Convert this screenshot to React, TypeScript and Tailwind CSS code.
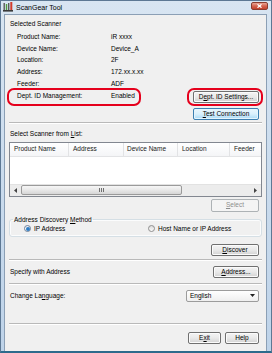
import React from "react";

function Btn({
  children,
  kind = "normal",
  className = "",
}: {
  children: React.ReactNode;
  kind?: "normal" | "disabled" | "focused";
  className?: string;
}) {
  const base =
    "h-[12px] rounded-[2px] border flex items-center justify-center text-[6.5px] leading-none shrink-0";
  const look =
    kind === "disabled"
      ? "border-[#adb2b5] bg-[#f4f4f4] text-[#8d8d8d]"
      : kind === "focused"
      ? "border-[#3c7fb1] bg-linear-to-b from-[#eaf6fd] via-[#d9f0fc] to-[#a9daf6] text-black shadow-[inset_0_0_0_1px_#e4f4fc]"
      : "border-[#707070] bg-linear-to-b from-[#f4f4f4] via-[#e9e9e9] to-[#d2d2d2] text-black shadow-[inset_0_0_0_1px_#fbfbfb]";
  return <div className={`${base} ${look} ${className}`}>{children}</div>;
}

function Sep({ className = "" }: { className?: string }) {
  return (
    <div
      className={`h-[2px] shrink-0 border-t border-[#b9b9b9] border-b border-b-white ${className}`}
    />
  );
}

function Row({ label, value }: { label: string; value: string }) {
  return (
    <div className="h-[11.7px] flex items-center pl-[8px]">
      <span className="w-[94px] shrink-0">{label}</span>
      <span>{value}</span>
    </div>
  );
}

function Tri({ dir }: { dir: "left" | "right" | "down" }) {
  if (dir === "down")
    return (
      <svg width="5" height="3" viewBox="0 0 5 3" className="shrink-0">
        <polygon points="0,0 5,0 2.5,3" fill="#222" />
      </svg>
    );
  return (
    <svg width="3" height="5" viewBox="0 0 3 5" className="shrink-0">
      {dir === "left" ? (
        <polygon points="3,0 3,5 0,2.5" fill="#444" />
      ) : (
        <polygon points="0,0 0,5 3,2.5" fill="#444" />
      )}
    </svg>
  );
}

function Radio({ checked }: { checked?: boolean }) {
  return checked ? (
    <span className="w-[7px] h-[7px] rounded-full border border-[#6f8197] bg-linear-to-b from-[#e8eef4] to-[#ffffff] flex items-center justify-center shrink-0">
      <span className="w-[4px] h-[4px] rounded-full bg-[#2d7cc4]" />
    </span>
  ) : (
    <span className="w-[7px] h-[7px] rounded-full border border-[#8f8f8f] bg-linear-to-b from-[#dcdcdc] to-[#fafafa] shrink-0" />
  );
}

export default function App() {
  return (
    <div className="w-[272px] h-[353px] flex flex-col overflow-hidden bg-linear-to-b from-[#d8e5f2] to-[#bed3e9] border-x border-t border-[#5d7894] border-b-2 border-b-[#2d6b8c] font-['Liberation_Sans',Arial,sans-serif] text-black">
      {/* Title bar */}
      <div className="h-[13px] shrink-0 flex items-start pl-[2px] pr-[3px]">
        <svg width="10" height="10" viewBox="0 0 10 10" className="mt-[1px] shrink-0">
          <rect x="0.5" y="1" width="1.4" height="8" fill="#5a5a5a" />
          <rect x="2.8" y="2" width="1.4" height="7" fill="#4e9a3c" />
          <rect x="5" y="1" width="1.4" height="8" fill="#5a5a5a" />
          <rect x="7.3" y="0" width="2" height="9" fill="#d23a2a" />
          <rect x="0" y="8" width="10" height="1.6" fill="#3a3a3a" />
        </svg>
        <span className="ml-[3px] mt-[3px] text-[7px] leading-none">ScanGear Tool</span>
        <div className="ml-auto mt-[1px] w-[17px] h-[8px] rounded-[2px] border border-[#8a3c30] bg-linear-to-b from-[#e9a596] via-[#d46450] to-[#c4402c] flex items-center justify-center">
          <svg width="5" height="4" viewBox="0 0 5 4">
            <path d="M0.5 0.3 L4.5 3.7 M4.5 0.3 L0.5 3.7" stroke="#fff" strokeWidth="1.2" />
          </svg>
        </div>
      </div>

      {/* Client area */}
      <div className="relative flex-1 ml-[3px] mr-[4px] bg-[#f0f0f0] border-x border-t border-[#8b9fb5] flex flex-col px-[4px] text-[6.5px] leading-none">
        <div className="mt-[4px] h-[10px] flex items-center pl-[1px]">Selected Scanner</div>

        <div className="mt-[2.5px] flex flex-col">
          <Row label="Product Name:" value="iR xxxx" />
          <Row label="Device Name:" value="Device_A" />
          <Row label="Location:" value="2F" />
          <Row label="Address:" value="172.xx.x.xx" />
          <Row label="Feeder:" value="ADF" />
          <div className="h-[11.7px] flex items-center pl-[8px]">
            <span className="w-[94px] shrink-0">Dept. ID Management:</span>
            <span>Enabled</span>
            <Btn className="ml-auto mr-[3px] w-[66px] self-start mt-[1px]">
              <span>
                D<span className="underline">e</span>pt. ID Settings...
              </span>
            </Btn>
          </div>
        </div>

        <div className="mt-[6.3px] flex justify-end pr-[3px]">
          <Btn kind="focused" className="w-[66px]">
            <span>
              <span className="underline">T</span>est Connection
            </span>
          </Btn>
        </div>

        <Sep className="mt-[2.5px]" />

        <div className="mt-[4.5px] h-[10px] flex items-center pl-[1px]">
          Select Scanner from&nbsp;<span className="underline">L</span>ist:
        </div>

        {/* List view */}
        <div className="mt-[3px] h-[55px] shrink-0 border border-[#828790] bg-white flex flex-col">
          <div className="h-[14px] flex border-b border-[#e2e3e5] bg-linear-to-b from-white to-[#f4f5f7] text-[#1a1a1a]">
            <div className="w-[59px] shrink-0 border-r border-[#e2e3e5] flex items-center pl-[4px]">Product Name</div>
            <div className="w-[55px] shrink-0 border-r border-[#e2e3e5] flex items-center pl-[4px]">Address</div>
            <div className="w-[54px] shrink-0 border-r border-[#e2e3e5] flex items-center pl-[3px]">Device Name</div>
            <div className="w-[52px] shrink-0 border-r border-[#e2e3e5] flex items-center pl-[4px]">Location</div>
            <div className="flex-1 flex items-center pl-[4px] overflow-hidden whitespace-nowrap">Feeder</div>
          </div>
          <div className="flex-1" />
          <div className="h-[12px] flex items-center bg-[#ececec] border-t border-[#e2e2e2]">
            <div className="w-[11px] h-full flex items-center justify-center shrink-0">
              <Tri dir="left" />
            </div>
            <div className="w-[161px] h-[10px] shrink-0 rounded-[2px] border border-[#9a9a9a] bg-linear-to-b from-[#f6f6f6] via-[#e8e8e8] to-[#d6d6d6] flex items-center justify-center gap-[1px]">
              <span className="w-[1px] h-[4px] bg-[#707070]" />
              <span className="w-[1px] h-[4px] bg-[#707070]" />
              <span className="w-[1px] h-[4px] bg-[#707070]" />
            </div>
            <div className="flex-1" />
            <div className="w-[11px] h-full flex items-center justify-center shrink-0">
              <Tri dir="right" />
            </div>
          </div>
        </div>

        <div className="mt-[2px] h-[13px] flex justify-end pr-[3px]">
          <Btn kind="disabled" className="w-[48px] h-[13px]">
            <span>
              <span className="underline">S</span>elect
            </span>
          </Btn>
        </div>

        {/* Group box */}
        <fieldset className="mt-[3px] border border-[#d5dfe5] rounded-[3px] pb-[3px] shadow-[inset_0_0_0_1px_#fbfcfd]">
          <legend className="ml-[3px] px-[1px] h-[10px] leading-[10px]">
            Address Discovery <span className="underline">M</span>ethod
          </legend>
          <div className="h-[8px] flex items-center pl-[14px]">
            <div className="w-[124px] flex items-center gap-[3px]">
              <Radio checked />
              <span>IP Address</span>
            </div>
            <div className="flex items-center gap-[3px]">
              <Radio />
              <span>Host Name or IP Address</span>
            </div>
          </div>
        </fieldset>

        <div className="mt-[7px] h-[12px] flex justify-end pr-[3px]">
          <Btn className="w-[48px]">
            <span>
              <span className="underline">D</span>iscover
            </span>
          </Btn>
        </div>

        <Sep className="mt-[3.5px]" />

        <div className="mt-[4.5px] h-[12px] flex items-center pl-[1px]">
          <span>Specify with Address</span>
          <Btn className="ml-auto mr-[3px] w-[46px]">
            <span>
              <span className="underline">A</span>ddress...
            </span>
          </Btn>
        </div>

        <Sep className="mt-[5.5px]" />

        <div className="mt-[4.5px] h-[12px] flex items-center pl-[1px]">
          <span>
            Change La<span className="underline">n</span>guage:
          </span>
          <div className="ml-auto mr-[3px] w-[73px] h-[12px] rounded-[2px] border border-[#9c9c9c] bg-linear-to-b from-white to-[#efefef] flex items-center pl-[3px] pr-[3px]">
            <span>English</span>
            <span className="ml-auto">
              <Tri dir="down" />
            </span>
          </div>
        </div>

        <Sep className="mt-[21px]" />

        <div className="mt-[7px] h-[12px] flex justify-end gap-[4px] pr-[3px]">
          <Btn className="w-[33px]">
            <span>
              E<span className="underline">x</span>it
            </span>
          </Btn>
          <Btn className="w-[34px]">
            <span>Help</span>
          </Btn>
        </div>

        {/* Annotation ovals */}
        <div className="absolute left-[2px] top-[72.5px] w-[134px] h-[18.5px] border-2 border-[#e5001c] rounded-[7px] pointer-events-none" />
        <div className="absolute left-[182px] top-[72.5px] w-[76px] h-[18.5px] border-2 border-[#e5001c] rounded-[7px] pointer-events-none" />
      </div>
    </div>
  );
}
